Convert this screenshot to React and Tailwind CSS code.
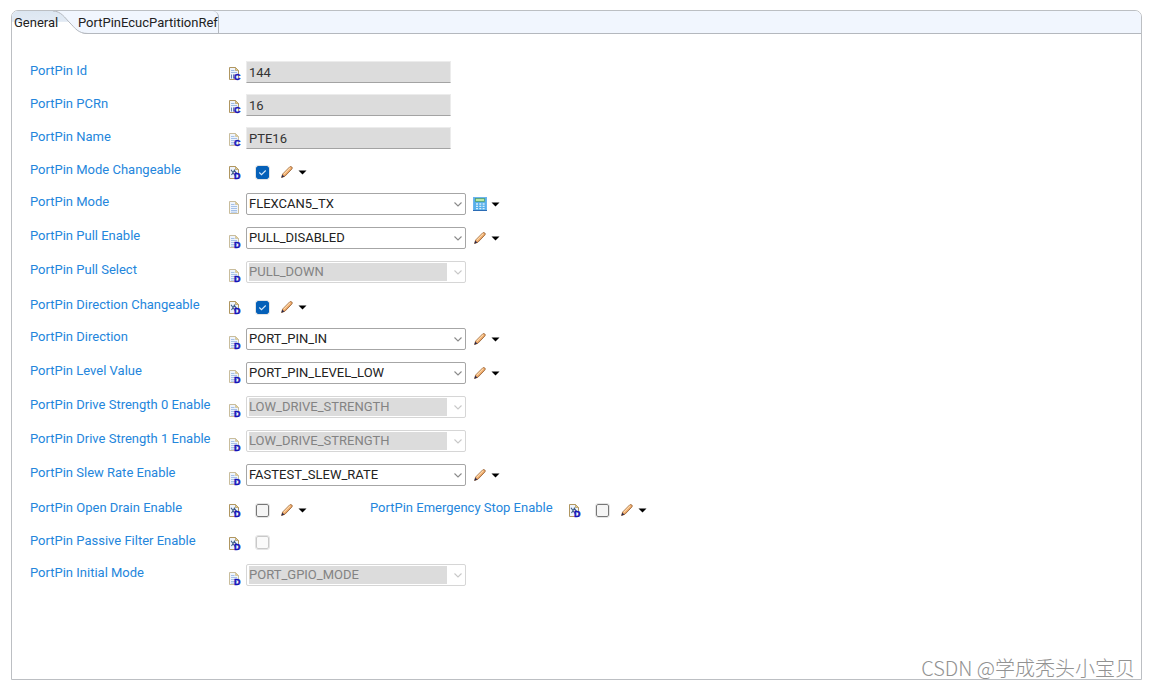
import React, { useState } from 'react';
import clsx from 'clsx';

const fields = [
  { id: 'pin-id', label: 'PortPin Id', type: 'text', icon: 'number', badge: 'C', value: '144' },
  { id: 'pcrn', label: 'PortPin PCRn', type: 'text', icon: 'number', badge: 'C', value: '16' },
  { id: 'name', label: 'PortPin Name', type: 'text', icon: 'text', badge: 'C', value: 'PTE16' },
  { id: 'mode-changeable', label: 'PortPin Mode Changeable', type: 'check', checked: true, action: 'pencil' },
  { id: 'mode', label: 'PortPin Mode', type: 'select', value: 'FLEXCAN5_TX', action: 'calculator' },
  { id: 'pull-enable', label: 'PortPin Pull Enable', type: 'select', badge: 'D', value: 'PULL_DISABLED', action: 'pencil' },
  { id: 'pull-select', label: 'PortPin Pull Select', type: 'select', badge: 'D', value: 'PULL_DOWN', disabled: true },
  { id: 'dir-changeable', label: 'PortPin Direction Changeable', type: 'check', checked: true, action: 'pencil' },
  { id: 'direction', label: 'PortPin Direction', type: 'select', badge: 'D', value: 'PORT_PIN_IN', action: 'pencil' },
  { id: 'level', label: 'PortPin Level Value', type: 'select', badge: 'D', value: 'PORT_PIN_LEVEL_LOW', action: 'pencil' },
  { id: 'drive-0', label: 'PortPin Drive Strength 0 Enable', type: 'select', badge: 'D', value: 'LOW_DRIVE_STRENGTH', disabled: true },
  { id: 'drive-1', label: 'PortPin Drive Strength 1 Enable', type: 'select', badge: 'D', value: 'LOW_DRIVE_STRENGTH', disabled: true },
  { id: 'slew', label: 'PortPin Slew Rate Enable', type: 'select', badge: 'D', value: 'FASTEST_SLEW_RATE', action: 'pencil' },
  {
    id: 'open-drain',
    label: 'PortPin Open Drain Enable',
    type: 'check',
    action: 'pencil',
    next: { id: 'emergency', label: 'PortPin Emergency Stop Enable', type: 'check', action: 'pencil' },
  },
  { id: 'passive', label: 'PortPin Passive Filter Enable', type: 'check', disabled: true },
  { id: 'initial', label: 'PortPin Initial Mode', type: 'select', badge: 'D', value: 'PORT_GPIO_MODE', disabled: true },
];

const DocIcon = ({ kind, badge }) => {
  const edge = kind === 'bool' || kind === 'number' ? '#b09660' : '#c9bd9c';
  return (
    <svg className="h-[13px] w-3 shrink-0 overflow-visible" viewBox="0 0 12 13" aria-hidden="true">
      <path d="M.5.5h6l3 3v9h-9z" fill="#eef4fd" stroke={edge} />
      <path d="M6.5.5v3h3z" fill="#e6cf8e" stroke={edge} strokeWidth=".7" />
      {kind === 'bool' && (
        <path d="M2 3.8l4 5.700M5.800 3.800l-3.300 5.200M4.800 3.800l3.200 4" stroke="#3c5d86" strokeWidth="1.1" fill="none" />
      )}
      {kind === 'number' && (
        <>
          <path d="M2 3.5h3.5M2 5.5h6" stroke="#9dbbe3" fill="none" />
          <path d="M2.5 7.5v4M4.5 7.5v4M4.5 8h2M4.5 11h2" stroke="#5577ad" strokeWidth=".9" fill="none" />
        </>
      )}
      {kind === 'text' && (
        <path d="M2 3.5h3.5M2 5.5h6M2 7.5h6M2 9.5h6M2 11.2h6" stroke="#a5c1e8" fill="none" />
      )}
      {badge && (
        <text
          x="5"
          y="12.5"
          fontFamily="Liberation Sans, sans-serif"
          fontSize="9"
          fontWeight="700"
          fill="#1411b8"
          stroke="#1411b8"
          strokeWidth=".4"
        >
          {badge}
        </text>
      )}
    </svg>
  );
};

const PencilIcon = () => (
  <svg className="h-3 w-3" viewBox="0 0 12 12" aria-hidden="true">
    <path d="M.6 11.5l1-3.4L8.7.9c.7-.6 1.5-.5 2.1.1s.6 1.4 0 2.1L4 10.2z" fill="#eda768" stroke="#8f5a2c" strokeWidth=".8" />
    <path d="M2.6 8.4l6.7-6.8" stroke="#ffdcae" strokeWidth="1.1" />
    <path d="M.4 11.7l.9-3 2 1.9z" fill="#23264f" />
  </svg>
);

const CalculatorIcon = () => (
  <svg className="h-[14px] w-[14px]" viewBox="0 0 14 14" aria-hidden="true">
    <rect x=".5" y=".5" width="13" height="13" fill="#58b0ea" stroke="#6cb4ee" />
    <path d="M0 13.5h14" stroke="#2b6cb5" />
    <rect x="2.5" y="1.5" width="9" height="3" fill="#b9e8a4" stroke="#4f9f74" strokeWidth=".8" />
    <path d="M3 7h9M3 9.3h9M3 11.6h9" stroke="#d8eefc" strokeWidth="1.3" strokeDasharray="2 1.3" />
  </svg>
);

const ActionMenu = ({ kind, label }) => (
  <button type="button" aria-label={`Edit ${label}`} className="flex h-[14px] items-center gap-1">
    {kind === 'calculator' ? <CalculatorIcon /> : <span className="flex w-[14px] justify-center"><PencilIcon /></span>}
    <svg className="h-[5px] w-[9px]" viewBox="0 0 9 5" aria-hidden="true">
      <path d="M.5.500h8L4.500 4.500z" fill="#000" />
    </svg>
  </button>
);

const TextControl = ({ field }) => (
  <input
    id={field.id}
    type="text"
    readOnly
    value={field.value}
    className="h-[22px] w-[205px] border border-[#ececec] border-b-[#a3a3a3] bg-[#dcdcdc] px-[2px] text-[#333] outline-none"
  />
);

const SelectControl = ({ field }) => (
  <div className="relative w-[220px]">
    <select
      id={field.id}
      disabled={field.disabled}
      defaultValue={field.value}
      className={clsx(
        'block h-[22px] w-full appearance-none rounded-[2px] border py-[1px] pr-[18px] pl-[2px] opacity-100 outline-none',
        field.disabled ? 'border-[#d6d6d6] bg-[#dcdcdc] bg-clip-content text-[#838383]' : 'border-[#a6a6a6] bg-white text-[#222]'
      )}
    >
      <option>{field.value}</option>
    </select>
    <svg className="pointer-events-none absolute top-[9px] right-1 h-[5px] w-2" viewBox="0 0 8 5" aria-hidden="true">
      <path d="M.5.5L4 4 7.5.5" fill="none" stroke={field.disabled ? '#c8c8c8' : '#8a8a8a'} strokeWidth="1.1" />
    </svg>
  </div>
);

const CheckControl = ({ field }) => {
  const [checked, setChecked] = useState(Boolean(field.checked));

  return (
    <div className="relative ml-[10px] h-[13px] w-[13px]">
      <input
        id={field.id}
        type="checkbox"
        checked={checked}
        disabled={field.disabled}
        onChange={(e) => setChecked(e.target.checked)}
        className={clsx(
          'block h-[13px] w-[13px] appearance-none rounded-[2px] border outline outline-[#e4e4e4]',
          checked && 'border-[#0560b8] bg-[#0560b8]',
          !checked && (field.disabled ? 'border-[#c9c9c9] bg-[#fafafa]' : 'border-[#777] bg-[#f5f5f5]')
        )}
      />
      {checked && (
        <svg className="pointer-events-none absolute inset-0 h-[13px] w-[13px]" viewBox="0 0 13 13" aria-hidden="true">
          <path d="M3.3 6.5l2.2 2.2 4.2-4.2" fill="none" stroke="#d6e8fa" strokeWidth="1.1" />
        </svg>
      )}
    </div>
  );
};

const Field = ({ field }) => {
  const isCheck = field.type === 'check';
  const isSelect = field.type === 'select';

  return (
    <div className={clsx('flex items-start', isSelect ? 'h-[34px]' : 'h-[33px] leading-5')}>
      <label htmlFor={field.id} className="w-[199px] shrink-0 whitespace-nowrap text-[#2486dc]">
        {field.label}
      </label>
      <div className={clsx('w-[17px] shrink-0', isSelect ? 'pt-2' : 'pt-[6px]')}>
        <DocIcon kind={isCheck ? 'bool' : field.icon || 'text'} badge={isCheck ? 'D' : field.badge} />
      </div>
      <div className={clsx('flex items-center', isCheck && 'gap-[11px] pt-[5px]', isSelect && 'gap-[7px]')}>
        {field.type === 'text' && <TextControl field={field} />}
        {isSelect && <SelectControl field={field} />}
        {isCheck && <CheckControl field={field} />}
        {field.action && <ActionMenu kind={field.action} label={field.label} />}
      </div>
    </div>
  );
};

const Tabs = () => (
  <div role="tablist" className="flex h-[23px] border-b border-[#b4b8be] bg-[#f1f6fe] leading-5">
    <button type="button" role="tab" aria-selected="true" className="relative h-[23px] w-[66px] pl-[2px] text-left">
      <svg className="absolute top-0 left-0 h-[23px] w-[76px]" viewBox="0 0 76 23" aria-hidden="true">
        <defs>
          <linearGradient id="tab-fill" x1="0" y1="0" x2="0" y2="1">
            <stop offset="0" stopColor="#dce6f1" />
            <stop offset=".45" stopColor="#e2eaf4" />
            <stop offset=".5" stopColor="#fff" />
          </linearGradient>
        </defs>
        <path d="M0 0h41c8 0 12 7 17 12s8 11 18 11H0z" fill="url(#tab-fill)" />
        <path d="M41 0c8 0 12 7 17 12s8 10.5 18 10.5" fill="none" stroke="#b4b8be" />
      </svg>
      <span className="relative">General</span>
    </button>
    <button type="button" role="tab" aria-selected="false" className="h-[23px] rounded-tr-[6px] border-r border-[#b4b8be]">
      PortPinEcucPartitionRef
    </button>
  </div>
);

const App = () => (
  <div className="relative flex min-h-screen flex-col bg-white pt-[10px] pr-2 pb-[7px] pl-[11px] font-['Roboto','Open_Sans',sans-serif] text-[13px] leading-[18px] text-[#222]">
    <main className="flex grow flex-col overflow-hidden rounded-t-[7px] border border-[#bcbfc3]">
      <Tabs />
      <form className="flex flex-col px-[18px] pt-[27px]">
        {fields.map((field) => (
          <div key={field.id} className="flex gap-[63px]">
            <Field field={field} />
            {field.next && <Field field={field.next} />}
          </div>
        ))}
      </form>
    </main>
    <p className="absolute right-[15px] bottom-[7px] font-['Noto_Sans_CJK_SC',sans-serif] text-[20px] leading-6 font-light text-[#929292]">
      CSDN @学成秃头小宝贝
    </p>
  </div>
);

export default App;
